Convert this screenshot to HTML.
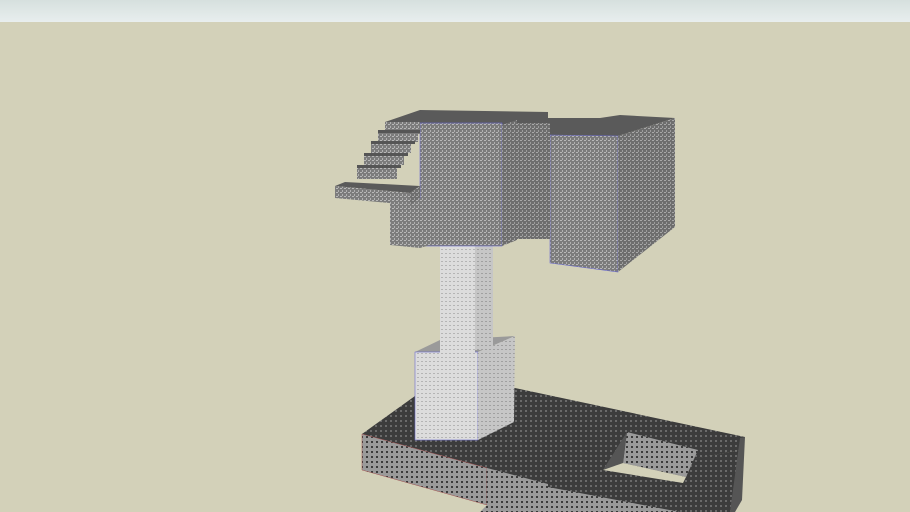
<!DOCTYPE html>
<html><head><meta charset="utf-8"><style>
html,body{margin:0;padding:0;width:910px;height:512px;overflow:hidden;background:#d3d1b9}
</style></head><body>
<svg width="910" height="512" viewBox="0 0 910 512" xmlns="http://www.w3.org/2000/svg">
<defs>
<linearGradient id="sky" x1="0" y1="0" x2="0" y2="1"><stop offset="0" stop-color="#d6e0de"/><stop offset="1" stop-color="#e8eeee"/></linearGradient>
<pattern id="mg" width="4" height="4" patternUnits="userSpaceOnUse"><rect width="4" height="4" fill="#7c7c7c"/><rect x="0" y="0" width="2" height="1" fill="#b8b8b8"/><rect x="2" y="2" width="1" height="2" fill="#b0b0b0"/></pattern>
<pattern id="mg2" width="4" height="4" patternUnits="userSpaceOnUse"><rect width="4" height="4" fill="#6e6e6e"/><rect x="0" y="0" width="2" height="1" fill="#a8a8a8"/><rect x="2" y="2" width="1" height="2" fill="#9c9c9c"/></pattern>
<pattern id="lt" width="4" height="4" patternUnits="userSpaceOnUse"><rect width="4" height="4" fill="#dcdcdc"/><rect x="1" y="1" width="2" height="1" fill="#b4b4b4"/></pattern>
<pattern id="lt2" width="4" height="4" patternUnits="userSpaceOnUse"><rect width="4" height="4" fill="#c6c6c6"/><rect x="1" y="1" width="2" height="1" fill="#a0a0a0"/></pattern>
<pattern id="dk" width="5" height="5" patternUnits="userSpaceOnUse"><rect width="5" height="5" fill="#3c3c3c"/><rect x="0" y="0" width="2" height="2" fill="#6a6a6a"/></pattern>
<pattern id="sd" width="5" height="5" patternUnits="userSpaceOnUse"><rect width="5" height="5" fill="#9a9a9a"/><rect x="1" y="1" width="2" height="2" fill="#3a3a3a"/></pattern>
</defs>
<rect x="0" y="0" width="910" height="22" fill="url(#sky)"/>
<polygon points="362,434 415,396 515,388 745,437 740,450 548,487 487,470" fill="url(#dk)"/>
<polygon points="362,434 487,468 487,505 362,470" fill="url(#sd)" stroke="#a05050" stroke-width=".5"/>
<polygon points="487,468 548,484 548,512 480,512 487,505" fill="url(#sd)"/>
<polygon points="548,486 740,450 742,470 735,512 548,512" fill="url(#dk)"/>
<polygon points="548,487 680,512 548,512" fill="url(#sd)"/>
<polygon points="740,438 745,437 742,500 735,512 730,512" fill="#555"/>
<polygon points="627,432 698,450 686,477 623,463" fill="url(#sd)"/>
<polygon points="627,432 623,463 603,470" fill="#555"/>
<polygon points="603,470 623,463 686,477 683,483" fill="#d3d1b9"/>
<polygon points="415,352 440,340 515,336 478,352" fill="#9a9a9a"/>
<rect x="415" y="352" width="63" height="88" fill="url(#lt)" stroke="#6a6ad0" stroke-width=".6"/>
<polygon points="478,352 515,336 514,422 478,440" fill="url(#lt2)"/>
<rect x="440" y="240" width="35" height="115" fill="url(#lt)"/>
<rect x="475" y="240" width="18" height="110" fill="url(#lt2)"/>
<polygon points="385,122 420,110 548,112 548,118 600,118 620,115 675,118 618,136 550,135 550,125 420,124" fill="#5a5a5a"/>
<polygon points="550,135 618,136 618,272 550,263" fill="url(#mg)" stroke="#6a6ad0" stroke-width=".6"/>
<polygon points="618,136 675,118 675,227 618,272" fill="url(#mg2)"/>
<rect x="517" y="123" width="33" height="116" fill="url(#mg2)"/>
<rect x="420" y="123" width="82" height="123" fill="url(#mg)" stroke="#6a6ad0" stroke-width=".6"/>
<polygon points="502,125 517,120 517,240 502,246" fill="url(#mg2)"/>
<polygon points="390,195 430,200 430,145 458,145 458,240 440,242 420,248 390,245" fill="url(#mg)"/>
<rect x="385" y="122" width="35" height="12" fill="url(#mg)"/>
<rect x="378" y="130" width="42" height="3" fill="#555"/>
<rect x="378" y="133" width="40" height="9" fill="url(#mg)"/>
<rect x="371" y="141" width="44" height="3" fill="#555"/>
<rect x="371" y="144" width="40" height="9" fill="url(#mg)"/>
<rect x="364" y="153" width="44" height="3" fill="#555"/>
<rect x="364" y="156" width="40" height="9" fill="url(#mg)"/>
<rect x="357" y="165" width="44" height="3" fill="#555"/>
<rect x="357" y="168" width="40" height="11" fill="url(#mg)"/>
<polygon points="335,186 345,182 420,186 410,193" fill="#5a5a5a"/>
<polygon points="335,186 410,193 410,205 335,198" fill="url(#mg)"/>
<polygon points="410,193 420,186 420,198 410,205" fill="url(#mg2)"/>
</svg>
</body></html>
